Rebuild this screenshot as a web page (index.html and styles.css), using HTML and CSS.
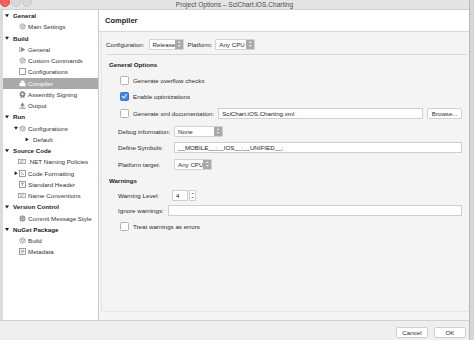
FILE: index.html
```html
<!DOCTYPE html>
<html>

<head>
    <meta charset="UTF-8">
    <title>Project Options - SciChart.iOS.Charting</title>
    <link rel="stylesheet" href="styles.css">
</head>

<body>
    <div class="window">
        <div class="titlebar">
            <div class="lights">
                <span class="light red"></span>
                <span class="light"></span>
                <span class="light"></span>
            </div>
            <div class="title">Project Options – SciChart.iOS.Charting</div>
            <div class="lights-spacer"></div>
        </div>

        <div class="content">
            <nav class="sidebar">
                <div class="row lvl0"><span class="twisty down"></span><b>General</b></div>
                <div class="row lvl1"><span class="slot"></span>
                    <svg class="icon" viewBox="0 0 8 8"><circle cx="4" cy="4" r="2.9" fill="none" stroke="currentColor" stroke-width="1.3" stroke-dasharray="1.2 0.75"/><circle cx="4" cy="4" r="1.3" fill="none" stroke="currentColor" stroke-width="0.8"/></svg>
                    Main Settings</div>
                <div class="row lvl0"><span class="twisty down"></span><b>Build</b></div>
                <div class="row lvl1"><span class="slot"></span>
                    <svg class="icon" viewBox="0 0 8 8"><rect x="0.5" y="1" width="1" height="6" fill="currentColor"/><path d="M2.5 1 L7 4 L2.5 7 Z" fill="currentColor"/></svg>
                    General</div>
                <div class="row lvl1"><span class="slot"></span>
                    <svg class="icon" viewBox="0 0 8 8"><circle cx="4" cy="4" r="2.9" fill="none" stroke="currentColor" stroke-width="1.3" stroke-dasharray="1.2 0.75"/><circle cx="4" cy="4" r="1.3" fill="none" stroke="currentColor" stroke-width="0.8"/></svg>
                    Custom Commands</div>
                <div class="row lvl1"><span class="slot"></span>
                    <svg class="icon" viewBox="0 0 8 8"><rect x="0.5" y="0.5" width="7" height="7" fill="none" stroke="currentColor" stroke-width="0.9"/></svg>
                    Configurations</div>
                <div class="row lvl1 selected"><span class="slot"></span>
                    <svg class="icon" viewBox="0 0 8 8"><rect x="2" y="0.8" width="4" height="2.4" fill="currentColor"/><rect x="0.5" y="3.5" width="7" height="3.7" rx="0.6" fill="currentColor"/></svg>
                    Compiler</div>
                <div class="row lvl1"><span class="slot"></span>
                    <svg class="icon" viewBox="0 0 8 8"><circle cx="4" cy="3.6" r="3" fill="currentColor" stroke="currentColor" stroke-width="0.9" stroke-dasharray="0.8 0.5"/><circle cx="4" cy="3.6" r="1.2" fill="#fff"/><path d="M2.2 5.5 L1.6 8 L4 7 L6.4 8 L5.8 5.5 Z" fill="currentColor"/></svg>
                    Assembly Signing</div>
                <div class="row lvl1"><span class="slot"></span>
                    <svg class="icon" viewBox="0 0 8 8"><path d="M4 0.6 L6.6 4 L4.9 4 L4.9 5.6 L3.1 5.6 L3.1 4 L1.4 4 Z" fill="currentColor"/><rect x="0.6" y="6.4" width="6.8" height="1.2" fill="currentColor"/></svg>
                    Output</div>
                <div class="row lvl0"><span class="twisty down"></span><b>Run</b></div>
                <div class="row lvl1"><span class="slot"><span class="twisty down"></span></span>
                    <svg class="icon" viewBox="0 0 8 8"><circle cx="4" cy="4" r="2.9" fill="none" stroke="currentColor" stroke-width="1.3" stroke-dasharray="1.2 0.75"/><circle cx="4" cy="4" r="1.3" fill="none" stroke="currentColor" stroke-width="0.8"/></svg>
                    Configurations</div>
                <div class="row lvl2"><span class="twisty right"></span>Default</div>
                <div class="row lvl0"><span class="twisty down"></span><b>Source Code</b></div>
                <div class="row lvl1"><span class="slot"></span>
                    <svg class="icon wide" viewBox="0 0 9 8"><rect x="0.5" y="1.5" width="8" height="5" fill="none" stroke="currentColor" stroke-width="0.8"/><path d="M2 3.3 H7 M2 4.8 H5.5" stroke="currentColor" stroke-width="0.7"/></svg>
                    .NET Naming Policies</div>
                <div class="row lvl1"><span class="slot"><span class="twisty right"></span></span>
                    <svg class="icon" viewBox="0 0 8 8"><rect x="0.5" y="0.5" width="7" height="7" fill="none" stroke="currentColor" stroke-width="0.9"/><path d="M2.2 2.2 L5.8 5.8 M2.2 5.8 L4 4" stroke="currentColor" stroke-width="0.8"/></svg>
                    Code Formatting</div>
                <div class="row lvl1"><span class="slot"></span>
                    <svg class="icon" viewBox="0 0 8 8"><rect x="0.5" y="0.5" width="7" height="7" fill="none" stroke="currentColor" stroke-width="0.9"/><path d="M2.3 2.5 H5.7 M4 2.5 V5.8" stroke="currentColor" stroke-width="0.9"/></svg>
                    Standard Header</div>
                <div class="row lvl1"><span class="slot"></span>
                    <svg class="icon wide" viewBox="0 0 9 8"><rect x="0.5" y="1.5" width="8" height="5" fill="none" stroke="currentColor" stroke-width="0.8"/><path d="M2 3.3 H7 M2 4.8 H5.5" stroke="currentColor" stroke-width="0.7"/></svg>
                    Name Conventions</div>
                <div class="row lvl0"><span class="twisty down"></span><b>Version Control</b></div>
                <div class="row lvl1"><span class="slot"></span>
                    <svg class="icon" viewBox="0 0 8 8"><circle cx="4" cy="4" r="3.4" fill="currentColor"/><circle cx="4" cy="4" r="1.8" fill="none" stroke="#fff" stroke-width="0.8"/></svg>
                    Commit Message Style</div>
                <div class="row lvl0"><span class="twisty down"></span><b>NuGet Package</b></div>
                <div class="row lvl1"><span class="slot"></span>
                    <svg class="icon" viewBox="0 0 8 8"><circle cx="4" cy="4" r="2.9" fill="none" stroke="currentColor" stroke-width="1.3" stroke-dasharray="1.2 0.75"/><circle cx="4" cy="4" r="1.3" fill="none" stroke="currentColor" stroke-width="0.8"/></svg>
                    Build</div>
                <div class="row lvl1"><span class="slot"></span>
                    <svg class="icon" viewBox="0 0 8 8"><rect x="0.5" y="0.5" width="7" height="7" fill="none" stroke="currentColor" stroke-width="0.9"/><path d="M2 2.6 H6 M2 4 H6 M2 5.4 H5" stroke="currentColor" stroke-width="0.7"/></svg>
                    Metadata</div>
            </nav>

            <section class="main">
                <header class="page-head">Compiler</header>
                <div class="panel">
                    <div class="config-row">
                        <span>Configuration:</span>
                        <div class="select release"><span class="value">Release</span><span class="arrow"></span></div>
                        <span class="platform-label">Platform:</span>
                        <div class="select cpu"><span class="value">Any CPU</span><span class="arrow"></span></div>
                    </div>
                    <div class="sep"></div>

                    <div class="group-title first">General Options</div>
                    <div class="form-row check-row r-first"><span class="checkbox"></span>Generate overflow checks</div>
                    <div class="form-row check-row"><span class="checkbox checked"></span>Enable optimizations</div>
                    <div class="form-row check-row r-gap1">
                        <span class="checkbox"></span>Generate xml documentation:
                        <div class="textbox xml">SciChart.iOS.Charting.xml</div>
                        <button class="btn browse">Browse...</button>
                    </div>
                    <div class="form-row field-row r-gap2">
                        <span class="label">Debug information:</span>
                        <div class="select none"><span class="value">None</span><span class="arrow"></span></div>
                    </div>
                    <div class="form-row field-row">
                        <span class="label">Define Symbols:</span>
                        <div class="textbox grow">__MOBILE__;__IOS__;__UNIFIED__;</div>
                    </div>
                    <div class="form-row field-row r-gap1">
                        <span class="label">Platform target:</span>
                        <div class="select target"><span class="value">Any CPU</span><span class="arrow"></span></div>
                    </div>

                    <div class="group-title">Warnings</div>
                    <div class="form-row short field-row">
                        <span class="label level">Warning Level:</span>
                        <div class="spinner">
                            <div class="textbox num">4</div>
                            <div class="stepper"><span class="up"></span><span class="dn"></span></div>
                        </div>
                    </div>
                    <div class="form-row short field-row">
                        <span class="label ignore">Ignore warnings:</span>
                        <div class="textbox grow"></div>
                    </div>
                    <div class="form-row check-row"><span class="checkbox"></span>Treat warnings as errors</div>
                </div>
            </section>
        </div>

        <footer class="footer">
            <button class="btn">Cancel</button>
            <button class="btn">OK</button>
        </footer>
    </div>
</body>

</html>
```

FILE: styles.css
```css
/* Page */
body {
    margin: 0;
    background-color: #d6d6d6;
    font-family: "Liberation Sans", Arial, sans-serif;
    font-size: 6.2px;
    color: #2b2b2b;
}

.window {
    width: 469px;
    height: 340px;
    border-right: 1px solid #b9b9b9;
    display: flex;
    flex-direction: column;
    background-color: #f4f4f4;
    overflow: hidden;
}

/* Title bar */
.titlebar {
    height: 9px;
    flex: none;
    display: grid;
    grid-template-columns: 40px 1fr 40px;
    align-items: center;
    background-color: #e4e4e4;
    border-bottom: 1px solid #cfcfcf;
}

.lights {
    display: flex;
    gap: 1px;
    margin-top: -6px;
}

.light {
    width: 8px;
    height: 8px;
    border-radius: 50%;
    background-color: #d9d9d9;
    border: 0.5px solid #c6c6c6;
}

.light.red {
    background-color: #f5605a;
    border-color: #e0443e;
}

.title {
    text-align: center;
    font-size: 6.6px;
    color: #4d4d4d;
}

/* Body */
.content {
    flex: 1;
    display: flex;
    min-height: 0;
}

.sidebar {
    width: 95px;
    flex: none;
    background-color: #fff;
    border-left: 3px solid #dcdcdc;
    border-right: 1px solid #cacaca;
}

.row {
    height: 11.25px;
    display: flex;
    align-items: center;
    white-space: nowrap;
    color: #333;
}

.row b {
    color: #222;
}

.lvl0 {
    padding-left: 2px;
}

.lvl0 .twisty {
    margin-right: 4px;
}

.lvl1 {
    padding-left: 10px;
}

.lvl2 {
    padding-left: 22px;
}

.lvl2 .twisty {
    margin-right: 4px;
}

.slot {
    width: 6px;
    display: flex;
    justify-content: center;
}

.twisty {
    width: 4px;
    height: 4px;
    display: inline-block;
    flex: none;
    background-color: #1e1e1e;
}

.twisty.down {
    clip-path: polygon(0 15%, 100% 15%, 50% 90%);
}

.twisty.right {
    clip-path: polygon(15% 0, 90% 50%, 15% 100%);
}

.icon {
    width: 7px;
    height: 7px;
    margin-right: 2px;
    flex: none;
    color: #858585;
}

.icon.wide {
    width: 8px;
    margin-left: -1px;
}

.selected {
    background-color: #a9a9a9;
    color: #fff;
}

.selected .icon {
    color: #fff;
}

/* Main area */
.main {
    flex: 1;
    display: flex;
    flex-direction: column;
}

.page-head {
    height: 21px;
    flex: none;
    display: flex;
    align-items: center;
    padding-left: 6px;
    background-color: #fff;
    border-bottom: 1px solid #d9d9d9;
    font-size: 7.5px;
    font-weight: bold;
    color: #222;
}

.panel {
    flex: 1;
    margin-left: 2px;
    margin-bottom: 8px;
    padding: 7px 9px 0 4px;
    border-left: 1px solid #e6e6e6;
    border-bottom: 1px solid #e6e6e6;
}

.config-row {
    height: 10px;
    display: flex;
    align-items: center;
}

.sep {
    height: 1px;
    margin: 5px -5px 0 0;
    background-color: #dadada;
}

.group-title {
    height: 16px;
    display: flex;
    align-items: center;
    padding-left: 3px;
    font-weight: bold;
    color: #222;
}

.group-title.first {
    height: 10px;
    margin-top: 4px;
}

.form-row {
    height: 16px;
    display: flex;
    align-items: center;
    white-space: nowrap;
}

.form-row.short {
    height: 15px;
}

.r-first {
    margin-top: 3px;
}

.r-gap1 {
    margin-top: 1px;
}

.r-gap2 {
    margin-top: 2px;
}

.check-row {
    padding-left: 14px;
}

.field-row {
    padding-left: 12px;
}

.checkbox {
    width: 7px;
    height: 7px;
    margin-right: 4px;
    flex: none;
    background-color: #fff;
    border: 0.5px solid #b3b3b3;
    border-radius: 1.5px;
}

.checkbox.checked {
    background-color: #3a86f4;
    border-color: #2f74d8;
    position: relative;
}

.checkbox.checked::after {
    content: "";
    position: absolute;
    left: 2.2px;
    top: 0.6px;
    width: 1.8px;
    height: 3.6px;
    border-right: 1px solid #fff;
    border-bottom: 1px solid #fff;
    transform: rotate(40deg);
}

.label {
    width: 56px;
    flex: none;
}

.label.level {
    width: 54px;
}

.label.ignore {
    width: 50px;
}

/* Controls */
.select {
    height: 9px;
    display: flex;
    flex: none;
    background-color: #fff;
    border: 1px solid #d2d2d2;
    border-radius: 1px;
}

.select .value {
    flex: 1;
    display: flex;
    align-items: center;
    padding-left: 3px;
}

.select .arrow {
    width: 8px;
    background-color: #a9a9a9;
    position: relative;
}

.select .arrow::before,
.select .arrow::after {
    content: "";
    position: absolute;
    left: 2.5px;
    width: 3px;
    height: 1.6px;
    background-color: #eee;
}

.select .arrow::before {
    top: 1.8px;
    clip-path: polygon(50% 0, 100% 100%, 0 100%);
}

.select .arrow::after {
    bottom: 1.8px;
    clip-path: polygon(0 0, 100% 0, 50% 100%);
}

.release {
    width: 33px;
    margin-left: 4px;
}

.platform-label {
    margin-left: 4px;
}

.cpu {
    width: 38px;
    margin-left: 3px;
}

.none {
    width: 47px;
}

.target {
    width: 36px;
}

.textbox {
    height: 9px;
    display: flex;
    align-items: center;
    padding-left: 3px;
    background-color: #fff;
    border: 1px solid #cfcfcf;
    color: #222;
}

.textbox.xml {
    width: 200px;
    margin-left: 4px;
}

.textbox.grow {
    flex: 1;
}

.spinner {
    display: flex;
    align-items: center;
}

.textbox.num {
    width: 11px;
}

.stepper {
    width: 5px;
    height: 9px;
    margin-left: 1px;
    display: flex;
    flex-direction: column;
    justify-content: space-around;
    align-items: center;
    background-color: #fff;
    border: 0.5px solid #cfcfcf;
    border-radius: 1px;
}

.stepper span {
    width: 2.4px;
    height: 1.4px;
    background-color: #777;
}

.stepper .up {
    clip-path: polygon(50% 0, 100% 100%, 0 100%);
}

.stepper .dn {
    clip-path: polygon(0 0, 100% 0, 50% 100%);
}

.btn {
    height: 11px;
    padding: 0;
    font-family: "Liberation Sans", Arial, sans-serif;
    font-size: 6.2px;
    color: #2b2b2b;
    background-color: #fff;
    border: 0.5px solid #d0d0d0;
    border-radius: 2px;
}

.browse {
    width: 35px;
    margin-left: 4px;
}

/* Footer */
.footer {
    height: 20px;
    flex: none;
    display: flex;
    justify-content: flex-end;
    gap: 6px;
    padding: 6px 3px 0 0;
    box-sizing: border-box;
    background-color: #efefef;
    border-top: 1px solid #d2d2d2;
}

.footer .btn {
    width: 32px;
}
```
